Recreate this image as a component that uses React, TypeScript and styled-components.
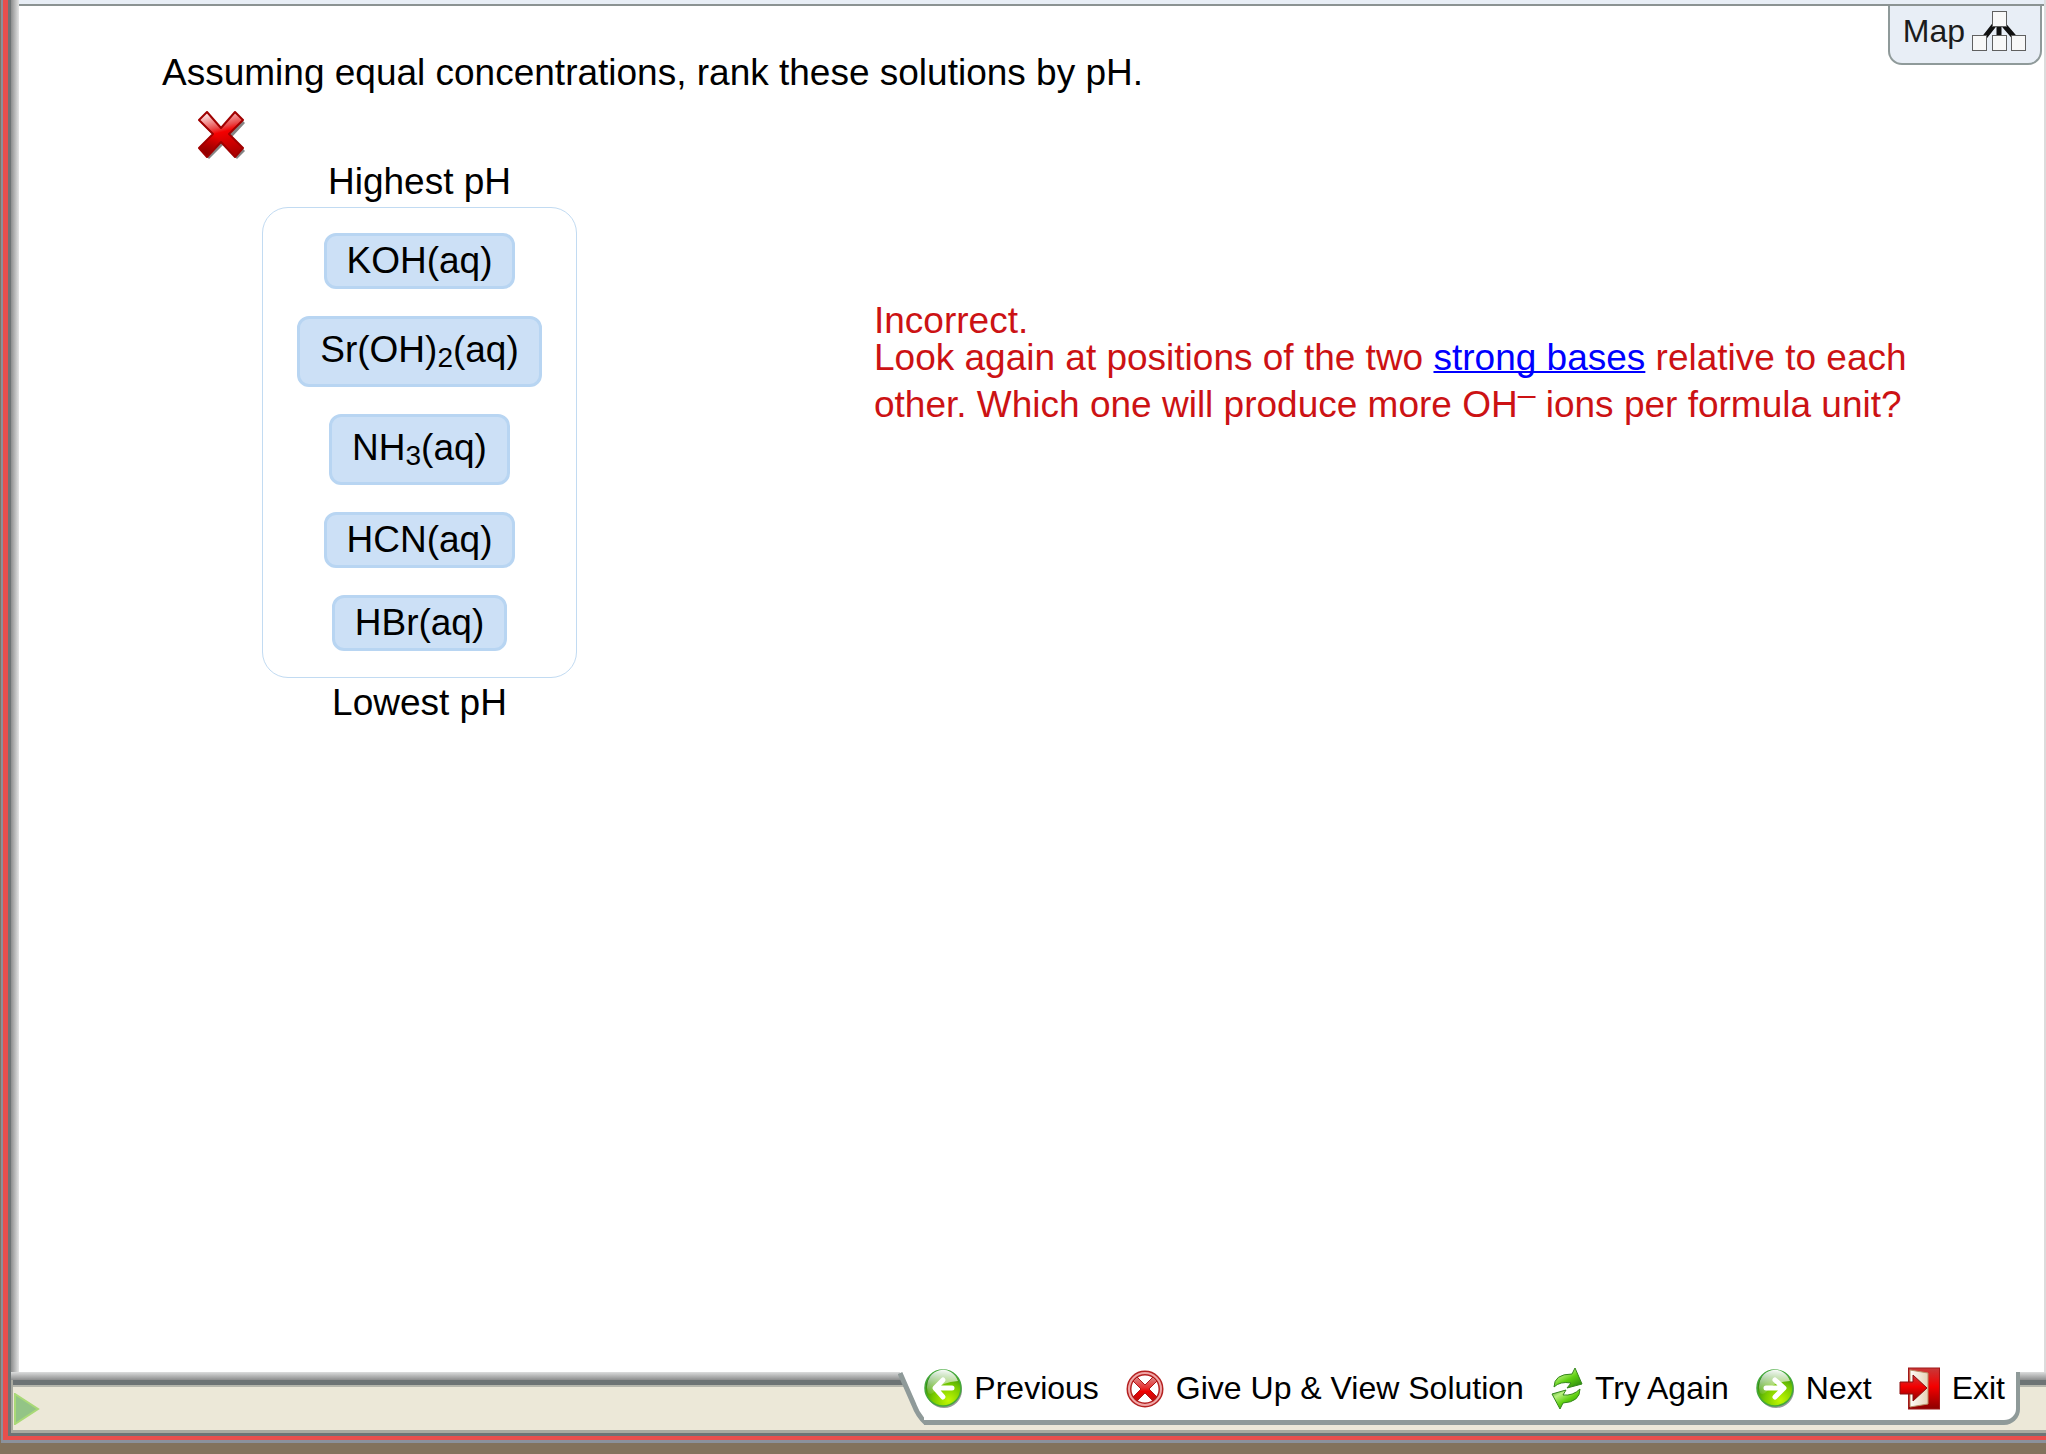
import React from "react";
import styled, { createGlobalStyle } from "styled-components";

const GlobalStyle = createGlobalStyle`
  * { box-sizing: border-box; }
  html, body { margin: 0; }
  body {
    font-family: "Liberation Sans", Arial, Helvetica, sans-serif;
    color: #000;
    background: #82725d;
  }
  p, h1, h2, ol { margin: 0; padding: 0; font-weight: 400; }
`;

const Shell = styled.div`
  min-height: 100vh;
  display: flex;
  flex-direction: column;
  padding: 0 0 11px 1px;
  background: #82725d;
`;

const Frame = styled.div`
  flex: 1;
  display: flex;
  border: solid #8b919c;
  border-width: 0 0 3px 2px;
`;

const RedRim = styled.div`
  flex: 1;
  display: flex;
  min-width: 0;
  border: solid #e84f4d;
  border-width: 0 0 4px 5px;
`;

const Window = styled.div`
  flex: 1;
  min-width: 0;
  display: flex;
  flex-direction: column;
  border: solid #6d7475;
  border-width: 0 0 3px 3px;
`;

const Stage = styled.div`
  flex: 1;
  display: flex;
  flex-direction: column;
  padding: 0 0 8px 8px;
  background:
    linear-gradient(to bottom, #dcdddd, #8d8e8e) bottom / 100% 8px no-repeat,
    linear-gradient(to right, #8d8e8e, #e4e5e5) left / 8px 100% no-repeat;
`;

const Page = styled.div`
  flex: 1;
  display: flex;
  flex-direction: column;
  background: #fff;
  border-right: 2px solid #dcdcdc;
`;

const TopBar = styled.div`
  height: 6px;
  background: #e8eef6;
  border-bottom: 2px solid #8b9393;
`;

const Header = styled.header`
  display: flex;
  align-items: flex-start;
  justify-content: space-between;
  padding: 0 2px 0 143px;
`;

const Prompt = styled.h1`
  padding-top: 46px;
  font-size: 37px;
  line-height: 42px;
`;

const Body = styled.main`
  display: flex;
  align-items: flex-start;
  padding: 0 100px 0 143px;
`;

const Verdict = styled.div`
  flex: none;
  width: 100px;
  padding: 17px 0 0 36px;
`;

const Ranking = styled.section`
  flex: none;
  width: 315px;
  padding-top: 67px;
  text-align: center;
`;

const RankLabel = styled.h2`
  font-size: 37px;
  line-height: 42px;
`;

const RankList = styled.ol`
  list-style: none;
  display: flex;
  flex-direction: column;
  align-items: center;
  gap: 27px;
  margin: 4px 0;
  padding: 25px 0 26px;
  border: 1px solid #c2dbf2;
  border-radius: 26px;
`;

const Chip = styled.li<{ $tall?: boolean }>`
  padding: ${(p) => (p.$tall ? "10px 20px 13px" : "4px 20px")};
  font-size: 37px;
  line-height: 42px;
  background: #cce0f6;
  border: 3px solid #b8d5f2;
  border-radius: 12px;
`;

const Sub = styled.sub`
  font-size: 28px;
  line-height: 0;
  vertical-align: -5px;
`;

const Feedback = styled.div`
  flex: 1;
  min-width: 0;
  padding: 208px 0 0 297px;
  font-size: 37px;
  line-height: 37px;
  color: #cc1214;
`;

const Sup = styled.sup`
  font-size: 32px;
  vertical-align: 12px;
`;

const Link = styled.a`
  color: #00f;
  text-decoration: underline;
  text-decoration-thickness: 2px;
  text-decoration-skip-ink: none;
`;

const MapButton = styled.button`
  flex: none;
  display: flex;
  align-items: center;
  gap: 7px;
  height: 59px;
  padding: 0 14px 7px 13px;
  font: 32px/36px "Liberation Sans", Arial, sans-serif;
  color: #1c1c1c;
  background: #e8eef6;
  border: 2px solid #8f9a9a;
  border-top: 0;
  border-radius: 0 0 14px 14px;
`;

const Dock = styled.footer`
  display: flex;
  align-items: flex-start;
  height: 53px;
  background:
    linear-gradient(#6d7475 5px, #b5b6ac 5px) top / 100% 7px no-repeat,
    linear-gradient(#a9aaa0, #a9aaa0) bottom / 100% 3px no-repeat,
    #ece8d8;
  border-left: 2px solid #a9aaa0;
`;

const PlayButton = styled.button`
  padding: 13px 0 0 1px;
  border: 0;
  background: none;
  line-height: 0;
`;

const Tray = styled.nav`
  display: flex;
  margin: -8px 26px 0 auto;
`;

const TrayBody = styled.div`
  display: flex;
  align-items: center;
  gap: 27px;
  height: 53px;
  padding: 0 11px 16px 0;
  background: #fff;
  border: solid #8f9a99;
  border-width: 0 4px 5px 0;
  border-bottom-right-radius: 16px;
`;

const TrayButton = styled.button`
  display: flex;
  align-items: center;
  gap: 12px;
  height: 32px;
  padding: 0;
  border: 0;
  background: none;
  font: 32px/36px "Liberation Sans", Arial, sans-serif;
  color: #000;
  white-space: nowrap;
`;

const Glyph = styled.svg`
  display: block;
  flex: none;
`;

const WrongIcon = () => (
  <Glyph width="48" height="48" viewBox="0 0 48 48" role="img" aria-label="Wrong">
    <defs>
      <linearGradient id="wx" x1="0.1" y1="0" x2="0.35" y2="1">
        <stop offset="0" stopColor="#ffffff" />
        <stop offset="0.4" stopColor="#ea4a4a" />
        <stop offset="0.52" stopColor="#f40000" />
        <stop offset="1" stopColor="#b00000" />
      </linearGradient>
      <radialGradient id="wxd" cx="0.1" cy="0.95" r="0.5">
        <stop offset="0" stopColor="#7a0000" stopOpacity="0.8" />
        <stop offset="1" stopColor="#7a0000" stopOpacity="0" />
      </radialGradient>
    </defs>
    <path d="M11 4 25 18 39 4 47 12 34 26 47 40 39 48 25 34 11 48 3 40 17 26 3 12Z" fill="#858585" />
    <path d="M9 1 23 17 37 1 45 9 31 23 45 37 37 46 23 31 9 46 1 37 15 23 1 9Z" fill="url(#wx)" />
    <path d="M9 1 23 17 37 1 45 9 31 23 45 37 37 46 23 31 9 46 1 37 15 23 1 9Z" fill="url(#wxd)" stroke="#a00000" strokeWidth="2" strokeLinejoin="round" />
  </Glyph>
);

const MapIcon = () => (
  <Glyph width="54" height="41" viewBox="0 0 54 41" aria-hidden="true">
    <path d="M23 13 12 27M27 14V26M31 13 43 27" stroke="#111" strokeWidth="5" />
    <g fill="#f8f8f8" stroke="#606060">
      <rect x="20.500" y="0.500" width="14" height="15" />
      <rect x="0.500" y="24.500" width="14" height="15" />
      <rect x="20.500" y="24.500" width="14" height="15" />
      <rect x="39.500" y="24.500" width="14" height="15" />
    </g>
  </Glyph>
);

const ArrowBall = ({ back }: { back?: boolean }) => (
  <Glyph width="38" height="41" viewBox="0 0 38 41" aria-hidden="true">
    <defs>
      <radialGradient id="ball" cx="0.65" cy="0.85" r="0.85">
        <stop offset="0" stopColor="#c2f800" />
        <stop offset="0.5" stopColor="#7acb00" />
        <stop offset="1" stopColor="#1f7d12" />
      </radialGradient>
      <linearGradient id="shine" x1="0.3" y1="0" x2="0.2" y2="1">
        <stop offset="0" stopColor="#fff" stopOpacity="0.95" />
        <stop offset="1" stopColor="#fff" stopOpacity="0.1" />
      </linearGradient>
    </defs>
    <circle cx="20" cy="22" r="18" fill="#999" />
    <circle cx="19" cy="20" r="18" fill="url(#ball)" stroke="#43a83a" strokeWidth="1.500" />
    <path d="M3 20A16 17 0 0 1 34 13Q18 14 12 22 7 28 4 25Z" fill="url(#shine)" />
    <path
      d={back ? "M28 20H13M19 12 11 20 19 29" : "M10 20H26M19 12 28 20 19 29"}
      fill="none" stroke="#fff" strokeWidth="5" strokeLinecap="round" strokeLinejoin="round"
    />
  </Glyph>
);

const GiveUpIcon = () => (
  <Glyph width="38" height="39" viewBox="0 0 38 39" aria-hidden="true">
    <defs>
      <linearGradient id="gu" x1="0" y1="0" x2="0" y2="1">
        <stop offset="0" stopColor="#d98a8a" />
        <stop offset="0.45" stopColor="#e83030" />
        <stop offset="0.6" stopColor="#f00000" />
        <stop offset="1" stopColor="#b81010" />
      </linearGradient>
    </defs>
    <circle cx="19" cy="20" r="16" fill="#fff" stroke="#b52222" strokeWidth="5" />
    <circle cx="19" cy="20" r="16" fill="none" stroke="#f0a8a8" strokeWidth="2" />
    <path d="M11 8 19 16 27 8 31 12 23 20 31 28 27 32 19 24 11 32 7 28 15 20 7 12Z" fill="url(#gu)" stroke="#b01818" />
  </Glyph>
);

const RetryIcon = () => (
  <Glyph width="32" height="43" viewBox="0 0 32 43" aria-hidden="true">
    <defs>
      <linearGradient id="rt" x1="0" y1="0" x2="0.8" y2="1">
        <stop offset="0" stopColor="#2f9a12" />
        <stop offset="0.3" stopColor="#b9f080" />
        <stop offset="0.6" stopColor="#5fd010" />
        <stop offset="1" stopColor="#2c8a10" />
      </linearGradient>
    </defs>
    <g fill="url(#rt)" stroke="#35861c" strokeLinejoin="round">
      <path d="M3 20Q3 7 21 7L24 1 31 17 16 21 20 16Q9 14 3 20Z" />
      <path d="M29 22Q29 35 12 36L9 42 1 27 15 23 12 28Q22 29 29 22Z" />
    </g>
  </Glyph>
);

const ExitIcon = () => (
  <Glyph width="41" height="43" viewBox="0 0 41 43" aria-hidden="true">
    <defs>
      <linearGradient id="ex" x1="0" y1="0" x2="0" y2="1">
        <stop offset="0" stopColor="#c83838" />
        <stop offset="0.45" stopColor="#f40000" />
        <stop offset="1" stopColor="#8c0000" />
      </linearGradient>
      <linearGradient id="exd" x1="0" y1="0" x2="1" y2="0">
        <stop offset="0" stopColor="#fffdf8" />
        <stop offset="1" stopColor="#e6d3b8" />
      </linearGradient>
    </defs>
    <rect x="9.500" y="1" width="31" height="41" fill="url(#ex)" stroke="#a01818" />
    <path d="M11 3 29 6V37L11 40Z" fill="url(#exd)" stroke="#b89068" />
    <path d="M1 15H14V8L28 21 14 34V27H1Z" fill="url(#ex)" stroke="#8a1010" />
  </Glyph>
);

const TrayEdge = () => (
  <Glyph width="26" height="53" viewBox="0 0 26 53" aria-hidden="true">
    <path d="M2 0H26V50Q20 45 16 35L2 2Z" fill="#fff" />
    <path d="M2 1 16 33Q20 44 28 51" fill="none" stroke="#8f9a99" strokeWidth="5" />
  </Glyph>
);

const solutions: { name: React.ReactNode; tall?: boolean }[] = [
  { name: "KOH(aq)" },
  { name: <>Sr(OH)<Sub>2</Sub>(aq)</>, tall: true },
  { name: <>NH<Sub>3</Sub>(aq)</>, tall: true },
  { name: "HCN(aq)" },
  { name: "HBr(aq)" },
];

const actions = [
  { label: "Previous", icon: <ArrowBall back /> },
  { label: "Give Up & View Solution", icon: <GiveUpIcon /> },
  { label: "Try Again", icon: <RetryIcon /> },
  { label: "Next", icon: <ArrowBall /> },
  { label: "Exit", icon: <ExitIcon /> },
];

export default function App() {
  return (
    <>
      <GlobalStyle />
      <Shell>
        <Frame>
          <RedRim>
            <Window>
              <Stage>
                <Page>
                  <TopBar />
                  <Header>
                    <Prompt>Assuming equal concentrations, rank these solutions by pH.</Prompt>
                    <MapButton type="button">Map <MapIcon /></MapButton>
                  </Header>
                  <Body>
                    <Verdict><WrongIcon /></Verdict>
                    <Ranking>
                      <RankLabel>Highest pH</RankLabel>
                      <RankList>
                        {solutions.map((s, i) => (
                          <Chip key={i} $tall={s.tall}>{s.name}</Chip>
                        ))}
                      </RankList>
                      <RankLabel>Lowest pH</RankLabel>
                    </Ranking>
                    <Feedback role="status">
                      <p>Incorrect.</p>
                      <p>
                        Look again at positions of the two <Link href="#strong-bases">strong bases</Link> relative
                        to each other. Which one will produce more OH<Sup>–</Sup> ions per formula unit?
                      </p>
                    </Feedback>
                  </Body>
                </Page>
              </Stage>
              <Dock>
                <PlayButton type="button" aria-label="Play">
                  <Glyph width="26" height="32" viewBox="0 0 26 32" aria-hidden="true">
                    <path d="M1 1 24 16 1 31Z" fill="#93c486" stroke="#a9d977" strokeWidth="2" />
                  </Glyph>
                </PlayButton>
                <Tray>
                  <TrayEdge />
                  <TrayBody>
                    {actions.map((a) => (
                      <TrayButton type="button" key={a.label}>{a.icon}{a.label}</TrayButton>
                    ))}
                  </TrayBody>
                </Tray>
              </Dock>
            </Window>
          </RedRim>
        </Frame>
      </Shell>
    </>
  );
}
